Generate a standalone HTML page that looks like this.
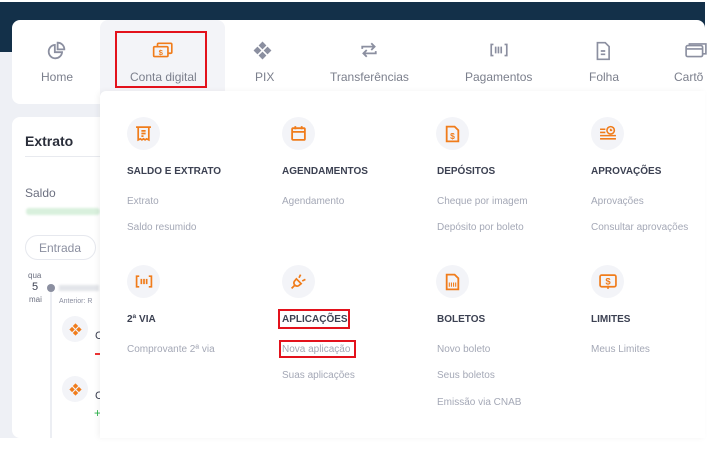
<!DOCTYPE html>
<html><head><meta charset="utf-8"><style>
*{margin:0;padding:0;box-sizing:border-box}
body{width:727px;height:458px;overflow:hidden;background:#fff;font-family:"Liberation Sans",sans-serif;position:relative}
.abs{position:absolute}
.hdr{left:0;top:2px;width:705px;height:50px;background:#133049}
.bg{left:0;top:52px;width:705px;height:386px;background:#eef0f5}
.nav{left:12px;top:20px;width:693px;height:84px;background:#fff;border-radius:8px}
.act{left:100px;top:20px;width:125px;height:80px;background:#f3f4f8;border-radius:8px 8px 0 0}
.tab{top:70px;font-size:12px;color:#7b7f8c;white-space:nowrap}
.ti{top:41px}
.red{border:2px solid #e3121c}
.card{left:12px;top:117px;width:100px;height:321px;background:#fff;border-radius:8px}
.dd{left:100px;top:91px;width:605px;height:347px;background:#fff;box-shadow:-2px 0 6px rgba(0,0,0,.05);border-radius:6px 0 0 0}
.circ{width:33px;height:33px;border-radius:50%;background:#f3f4f8;display:flex;align-items:center;justify-content:center}
.t{font-size:10px;font-weight:bold;color:#3c4152;white-space:nowrap}
.l{font-size:10px;color:#a4a8b6;white-space:nowrap}
</style></head><body>
<div class="abs hdr"></div>
<div class="abs bg"></div>
<div class="abs nav"></div>
<div class="abs act"></div>
<svg class="abs ti" style="left:47px" width="19" height="19" viewBox="0 0 17 17" fill="none" stroke="#8b8fa0" stroke-width="1.6"><path d="M7 3.5A6 6 0 1 0 13.5 10H7z"/><path d="M9.5 1.5v6h6a6 6 0 0 0-6-6z"/></svg>
<div class="abs tab" style="left:41px">Home</div>
<svg class="abs ti" style="left:152px" width="22" height="19" viewBox="0 0 20 17" fill="none" stroke="#f07c1b" stroke-width="1.5"><rect x="5" y="2" width="13" height="9" rx="1"/><rect x="1.5" y="5" width="13" height="9" rx="1" fill="#f3f4f8"/><text x="8" y="12.5" font-size="7" fill="#f07c1b" stroke="none" text-anchor="middle" font-weight="bold" font-family="Liberation Sans">$</text></svg>
<div class="abs tab" style="left:130px">Conta digital</div>
<div class="abs red" style="left:115px;top:31px;width:92px;height:57px"></div>
<svg class="abs ti" style="left:253px" width="19" height="19" viewBox="0 0 17 17" fill="#8b8fa0"><path d="M8.5 0.5l3.5 3.5-3.5 3.5-3.5-3.5zM4 5l3.5 3.5L4 12 .5 8.5zM13 5l3.5 3.5L13 12 9.5 8.5zM8.5 9.5l3.5 3.5-3.5 3.5L5 13z"/></svg>
<div class="abs tab" style="left:255px">PIX</div>
<svg class="abs ti" style="left:360px" width="18" height="18" viewBox="0 0 16 16" fill="none" stroke="#8b8fa0" stroke-width="1.6"><path d="M2 7V5h11M10 2l3 3-3 3M14 9v2H3M6 14l-3-3 3-3"/></svg>
<div class="abs tab" style="left:330px">Transferências</div>
<svg class="abs ti" style="left:489px" width="20" height="18" viewBox="0 0 18 16" fill="none" stroke="#8b8fa0" stroke-width="1.5"><path d="M4 3H2v10h2M14 3h2v10h-2M6 5v6M8.5 5v6M11 5v6"/></svg>
<div class="abs tab" style="left:465px">Pagamentos</div>
<svg class="abs ti" style="left:595px" width="16" height="20" viewBox="0 0 14 18" fill="none" stroke="#8b8fa0" stroke-width="1.5"><path d="M2 1.5h7l3.5 3.5v11.5H2z"/><path d="M5 9h4M5 12h4" /></svg>
<div class="abs tab" style="left:589px">Folha</div>
<svg class="abs ti" style="left:685px" width="22" height="18" viewBox="0 0 20 16" fill="none" stroke="#8b8fa0" stroke-width="1.5"><rect x="1" y="4" width="15" height="10" rx="1.5"/><path d="M4 4V2.5h15v9h-3M1 7h15"/></svg>
<div class="abs tab" style="left:674px">Cartõ</div>

<div class="abs card"></div>
<div class="abs" style="left:25px;top:133px;font-size:14px;font-weight:bold;color:#2a2e3a">Extrato</div>
<div class="abs" style="left:25px;top:156px;width:80px;height:1px;background:#e8eaef"></div>
<div class="abs" style="left:25px;top:186px;font-size:12px;color:#6c7080">Saldo</div>
<div class="abs" style="left:26px;top:208px;width:74px;height:7px;background:#d9f0dd;border-radius:3px;filter:blur(1px)"></div>
<div class="abs" style="left:25px;top:235px;width:71px;height:25px;border:1px solid #e6e8ee;border-radius:13px;font-size:12px;color:#8b8fa0;padding:5px 0 0 13px">Entrada</div>
<div class="abs" style="left:28px;top:271px;font-size:8px;color:#6c7080">qua</div>
<div class="abs" style="left:32px;top:281px;font-size:11px;color:#3c4152">5</div>
<div class="abs" style="left:29px;top:295px;font-size:8px;color:#6c7080">mai</div>
<div class="abs" style="left:47px;top:284px;width:8px;height:8px;border-radius:50%;background:#8b8fa0"></div>
<div class="abs" style="left:50px;top:292px;width:2px;height:146px;background:#eceef3"></div>
<div class="abs" style="left:59px;top:285px;width:40px;height:6px;background:#e3e5ea;filter:blur(1px)"></div>
<div class="abs" style="left:59px;top:298px;font-size:7px;color:#8b8fa0;white-space:nowrap">Anterior: R</div>
<div class="abs circ" style="left:62px;top:316px;width:26px;height:26px"><svg width="13" height="13" viewBox="0 0 17 17" fill="#f07c1b"><path d="M8.5 0.5l3.5 3.5-3.5 3.5-3.5-3.5zM4 5l3.5 3.5L4 12 .5 8.5zM13 5l3.5 3.5L13 12 9.5 8.5zM8.5 9.5l3.5 3.5-3.5 3.5L5 13z"/></svg></div>
<div class="abs circ" style="left:62px;top:376px;width:26px;height:26px"><svg width="13" height="13" viewBox="0 0 17 17" fill="#f07c1b"><path d="M8.5 0.5l3.5 3.5-3.5 3.5-3.5-3.5zM4 5l3.5 3.5L4 12 .5 8.5zM13 5l3.5 3.5L13 12 9.5 8.5zM8.5 9.5l3.5 3.5-3.5 3.5L5 13z"/></svg></div>
<div class="abs" style="left:95px;top:330px;font-size:11px;color:#3c4152">C</div>
<div class="abs" style="left:95px;top:353px;width:6px;height:2px;background:#e33"></div>
<div class="abs" style="left:95px;top:390px;font-size:11px;color:#3c4152">C</div>
<div class="abs" style="left:94px;top:406px;font-size:12px;color:#2bb34a">+</div>

<div class="abs dd"></div>
<div class="abs circ" style="left:127px;top:117px"><svg width="17" height="17" viewBox="0 0 16 16" fill="none" stroke="#f07c1b" stroke-width="1.6"><path d="M1 2h14M3 2v12l2-1 1.5 1 1.5-1 1.5 1 1.5-1 2 1V2M6 5.5h4M6 8h4M6 10.5h2"/></svg></div>
<div class="abs circ" style="left:282px;top:117px"><svg width="17" height="17" viewBox="0 0 16 16" fill="none" stroke="#f07c1b" stroke-width="1.7"><rect x="2" y="3" width="12" height="11" rx="1"/><path d="M2 6.5h12M5 1v3M11 1v3"/></svg></div>
<div class="abs circ" style="left:436px;top:117px"><svg width="15" height="18" viewBox="0 0 14 17" fill="none" stroke="#f07c1b" stroke-width="1.7"><path d="M1.5 1.5h7.5l3.5 3.5v10.5h-11z"/><text x="7" y="13" font-size="8" fill="#f07c1b" stroke="none" text-anchor="middle" font-weight="bold" font-family="Liberation Sans">$</text></svg></div>
<div class="abs circ" style="left:591px;top:117px"><svg width="18" height="17" viewBox="0 0 17 16" fill="none" stroke="#f07c1b" stroke-width="1.5"><path d="M1 4h5M1 7h5M1 10h15M1 13h15"/><circle cx="11" cy="5" r="3.5"/><path d="M11 3.5V5h1.5"/></svg></div>
<div class="abs t" style="left:127px;top:166px">SALDO E EXTRATO</div>
<div class="abs t" style="left:282px;top:166px">AGENDAMENTOS</div>
<div class="abs t" style="left:437px;top:166px">DEPÓSITOS</div>
<div class="abs t" style="left:591px;top:166px">APROVAÇÕES</div>
<div class="abs l" style="left:127px;top:196px">Extrato</div>
<div class="abs l" style="left:127px;top:222px">Saldo resumido</div>
<div class="abs l" style="left:282px;top:196px">Agendamento</div>
<div class="abs l" style="left:437px;top:196px">Cheque por imagem</div>
<div class="abs l" style="left:437px;top:222px">Depósito por boleto</div>
<div class="abs l" style="left:591px;top:196px">Aprovações</div>
<div class="abs l" style="left:591px;top:222px">Consultar aprovações</div>
<div class="abs circ" style="left:127px;top:265px"><svg width="18" height="15" viewBox="0 0 17 14" fill="none" stroke="#f07c1b" stroke-width="1.6"><path d="M4 2H1.5v10H4M13 2h2.5v10H13M6 4.5v5M8.5 4.5v5M11 4.5v5"/></svg></div>
<div class="abs circ" style="left:282px;top:265px"><svg width="17" height="17" viewBox="0 0 16 16" fill="none" stroke="#f07c1b" stroke-width="1.6"><path d="M10 1.5L8.5 4.5M14.5 6L11.5 7.5"/><path d="M6 5.5l4.5 4.5-2.5 2a3 3 0 0 1-4-4z"/><path d="M4.5 11.5L1.5 14.5"/></svg></div>
<div class="abs circ" style="left:436px;top:265px"><svg width="15" height="18" viewBox="0 0 14 17" fill="none" stroke="#f07c1b" stroke-width="1.7"><path d="M1.5 1.5h7.5l3.5 3.5v10.5h-11z"/><path d="M4 9v4M6 9v4M8 9v4M10 9v4" stroke-width="1"/></svg></div>
<div class="abs circ" style="left:591px;top:265px"><svg width="18" height="16" viewBox="0 0 17 15" fill="none" stroke="#f07c1b" stroke-width="1.6"><rect x="1" y="1" width="15" height="11" rx="1.5"/><text x="8.5" y="10" font-size="9" fill="#f07c1b" stroke="none" text-anchor="middle" font-weight="bold" font-family="Liberation Sans">$</text><path d="M8.5 12v2"/></svg></div>
<div class="abs t" style="left:127px;top:314px">2ª VIA</div>
<div class="abs t" style="left:282px;top:314px">APLICAÇÕES</div>
<div class="abs red" style="left:278px;top:309px;width:72px;height:20px"></div>
<div class="abs t" style="left:437px;top:314px">BOLETOS</div>
<div class="abs t" style="left:591px;top:314px">LIMITES</div>
<div class="abs l" style="left:127px;top:344px">Comprovante 2ª via</div>
<div class="abs l" style="left:282px;top:344px">Nova aplicação</div>
<div class="abs red" style="left:279px;top:340px;width:77px;height:18px"></div>
<div class="abs l" style="left:282px;top:370px">Suas aplicações</div>
<div class="abs l" style="left:437px;top:344px">Novo boleto</div>
<div class="abs l" style="left:437px;top:370px">Seus boletos</div>
<div class="abs l" style="left:437px;top:397px">Emissão via CNAB</div>
<div class="abs l" style="left:591px;top:344px">Meus Limites</div>
</body></html>
